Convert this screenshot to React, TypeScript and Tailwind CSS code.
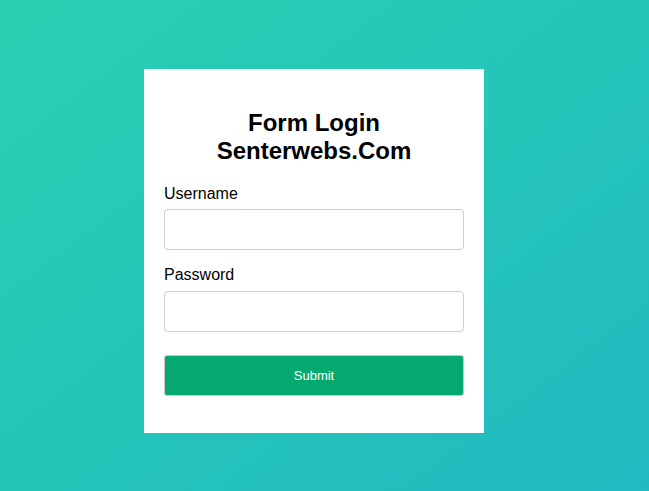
export default function App() {
  return (
    <div
      className="min-h-screen w-full bg-[linear-gradient(to_bottom_right,#29d0b0,#21bac1)] pl-[144px] pt-[69px]"
      style={{ fontFamily: '"Liberation Sans", Arial, sans-serif' }}
    >
      <form className="w-[340px] bg-white px-5 pb-[37px] pt-5">
        <h2 className="my-5 text-center text-[24px] font-bold leading-[28px] text-black">
          Form Login
          <br />
          Senterwebs.Com
        </h2>
        <label className="mb-[6px] block text-[16px] leading-[18px] text-black">Username</label>
        <input
          type="text"
          className="block h-[41px] w-full rounded-[4px] border border-[#cccccc] bg-white px-2 outline-none"
        />
        <label className="mb-[7px] mt-4 block text-[16px] leading-[18px] text-black">Password</label>
        <input
          type="password"
          className="block h-[41px] w-full rounded-[4px] border border-[#cccccc] bg-white px-2 outline-none"
        />
        <button
          type="button"
          className="mt-[23px] block h-[41px] w-full rounded-[3px] border border-[#c8c8c8] bg-[#05a86e] text-[13px] text-white"
        >
          Submit
        </button>
      </form>
    </div>
  );
}
